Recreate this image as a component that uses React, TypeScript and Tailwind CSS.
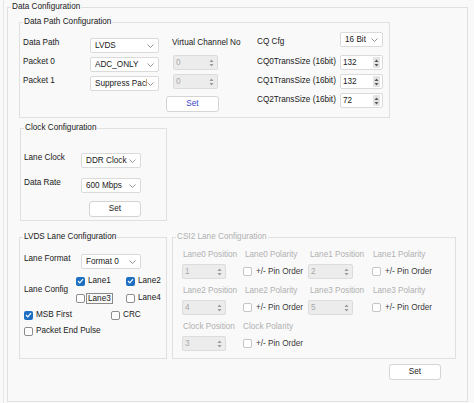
import type { ReactNode } from 'react'

function Chevron() {
  return (
    <svg width="7" height="4" viewBox="0 0 7 4" className="shrink-0">
      <polyline points="0.5,0.5 3.5,3.5 6.5,0.5" fill="none" stroke="#8a8a8a" strokeWidth="0.9" />
    </svg>
  )
}

function Combo({ value, className }: { value: string; className: string }) {
  return (
    <div className={`flex h-[15px] items-center justify-between overflow-hidden rounded-[2px] border border-[#dadada] bg-white pr-[4px] pl-[4px] whitespace-nowrap ${className}`}>
      <span className="overflow-hidden">{value}</span>
      <Chevron />
    </div>
  )
}

function Spin({ value, disabled, className }: { value: string; disabled?: boolean; className: string }) {
  return (
    <div
      className={`flex h-[15px] items-center justify-between rounded-[2px] border pr-[2px] pl-[2px] ${
        disabled ? 'border-[#dcdcdc] bg-[#ececec] text-[#a8a8a8]' : 'border-[#dadada] bg-white text-[#202020]'
      } ${className}`}
    >
      <span>{value}</span>
      <span className={`flex h-[11px] w-[7px] items-center justify-center rounded-[1px] ${disabled ? '' : 'bg-[#e4e4e4]'}`}>
        <svg width="5" height="8" viewBox="0 0 5 8">
          <polygon points="2.5,0.5 4.5,3 0.5,3" fill={disabled ? '#9a9a9a' : '#555'} />
          <polygon points="0.5,5 4.5,5 2.5,7.5" fill={disabled ? '#9a9a9a' : '#555'} />
        </svg>
      </span>
    </div>
  )
}

function Button({ children, className }: { children: ReactNode; className: string }) {
  return (
    <div className={`flex h-[16px] items-center justify-center rounded-[3px] border border-[#d4d4d4] bg-white ${className}`}>
      {children}
    </div>
  )
}

function Check({ checked, disabled }: { checked?: boolean; disabled?: boolean }) {
  if (checked)
    return (
      <span className="flex h-[9px] w-[9px] shrink-0 items-center justify-center rounded-[2px] bg-[#1d6fc4]">
        <svg width="7" height="6" viewBox="0 0 7 6">
          <polyline points="1,3 2.8,4.8 6,1.2" fill="none" stroke="#fff" strokeWidth="1.2" />
        </svg>
      </span>
    )
  return (
    <span
      className={`h-[9px] w-[9px] shrink-0 rounded-[2px] border bg-white ${disabled ? 'border-[#c4c4c4]' : 'border-[#8e8e8e]'}`}
    />
  )
}

function Group({ title, disabled, className, children }: { title: string; disabled?: boolean; className: string; children: ReactNode }) {
  return (
    <div className={`relative border border-[#e0e0e0] ${className}`}>
      <span
        className={`absolute -top-[7px] left-[3px] bg-[#f9f9f9] px-[1px] leading-[12px] whitespace-nowrap ${
          disabled ? 'text-[#b0b0b0]' : 'text-[#202020]'
        }`}
      >
        {title}
      </span>
      {children}
    </div>
  )
}

export default function App() {
  return (
    <div className="h-[403px] w-[474px] overflow-hidden bg-[#f9f9f9] font-['Liberation_Sans',Arial,sans-serif] text-[8.2px] leading-[12px] text-[#202020]">
      <div className="ml-[3px] h-[403px] border-l border-[#e6e6e6] pt-[7px] pl-[3px]">
        <Group title="Data Configuration" className="h-[395px] w-[461px]">
          {/* Data Path Configuration */}
          <Group title="Data Path Configuration" className="mt-[14px] ml-[11px] h-[96px] w-[371px]">
            <div className="flex items-start pl-[3px]">
              <div className="mt-[15px] grid grid-cols-[67px_69px] gap-y-[4px]">
                <div className="h-[15px] leading-[10px]">Data Path</div>
                <Combo value="LVDS" className="w-[69px]" />
                <div className="h-[15px] leading-[10px]">Packet 0</div>
                <Combo value="ADC_ONLY" className="w-[69px]" />
                <div className="h-[15px] leading-[10px]">Packet 1</div>
                <Combo value="Suppress Pacl" className="w-[69px]" />
              </div>
              <div className="ml-[7px] flex w-[53px] flex-col">
                <div className="mt-[15px] ml-[6px] h-[10px] leading-[10px] whitespace-nowrap">Virtual Channel No</div>
                <Spin value="0" disabled className="mt-[7px] ml-[7px] w-[45px]" />
                <Spin value="0" disabled className="mt-[4px] ml-[7px] w-[45px]" />
                <Button className="mt-[7px] w-[53px] text-[#3a44c6]">Set</Button>
              </div>
              <div className="ml-[38px] flex w-[83px] flex-col">
                <div className="mt-[14px] leading-[10px]">CQ Cfg</div>
                <div className="mt-[10px] leading-[10px] whitespace-nowrap">CQ0TransSize (16bit)</div>
                <div className="mt-[9px] leading-[10px] whitespace-nowrap">CQ1TransSize (16bit)</div>
                <div className="mt-[9px] leading-[10px] whitespace-nowrap">CQ2TransSize (16bit)</div>
              </div>
              <div className="flex w-[43px] flex-col">
                <Combo value="16 Bit" className="mt-[9px] w-[43px]" />
                <Spin value="132" className="mt-[8px] w-[43px]" />
                <Spin value="132" className="mt-[4px] w-[43px]" />
                <Spin value="72" className="mt-[4px] w-[43px]" />
              </div>
            </div>
          </Group>

          {/* Clock Configuration */}
          <Group title="Clock Configuration" className="mt-[10px] ml-[12px] h-[93px] w-[147px]">
            <div className="mt-[24px] grid grid-cols-[57px_60px] gap-y-[10px] pl-[3px]">
              <div className="h-[15px] leading-[10px]">Lane Clock</div>
              <Combo value="DDR Clock" className="w-[60px]" />
              <div className="h-[15px] leading-[10px]">Data Rate</div>
              <Combo value="600 Mbps" className="w-[60px]" />
            </div>
            <Button className="mt-[8px] ml-[68px] w-[52px]">Set</Button>
          </Group>

          <div className="mt-[16px] ml-[11px] flex gap-[5px]">
            {/* LVDS Lane Configuration */}
            <Group title="LVDS Lane Configuration" className="h-[122px] w-[148px]">
              <div className="mt-[16px] grid grid-cols-[57px_60px] pl-[4px]">
                <div className="h-[15px] leading-[10px]">Lane Format</div>
                <Combo value="Format 0" className="w-[60px]" />
              </div>
              <div className="mt-[6px] flex items-center pl-[4px]">
                <div className="w-[54px]">Lane Config</div>
                <div className="grid grid-cols-[50px_40px] gap-y-[5px]">
                  <div className="flex items-center gap-[3px]">
                    <Check checked />
                    <span>Lane1</span>
                  </div>
                  <div className="flex items-center gap-[3px]">
                    <Check checked />
                    <span>Lane2</span>
                  </div>
                  <div className="flex items-center gap-[1px]">
                    <Check />
                    <span className="border border-[#8a8a8a] px-[1px] leading-[9px]">Lane3</span>
                  </div>
                  <div className="flex items-center gap-[3px]">
                    <Check />
                    <span>Lane4</span>
                  </div>
                </div>
              </div>
              <div className="mt-[5px] flex items-center pl-[4px]">
                <div className="flex w-[87px] items-center gap-[3px]">
                  <Check checked />
                  <span>MSB First</span>
                </div>
                <div className="flex items-center gap-[3px]">
                  <Check />
                  <span>CRC</span>
                </div>
              </div>
              <div className="mt-[4px] flex items-center gap-[3px] pl-[4px]">
                <Check />
                <span>Packet End Pulse</span>
              </div>
            </Group>

            {/* CSI2 Lane Configuration */}
            <Group title="CSI2 Lane Configuration" disabled className="h-[122px] w-[284px]">
              <div className="mt-[12px] flex flex-col gap-[7px] pl-[9px] text-[#b0b0b0]">
                <div className="flex flex-col gap-[4px]">
                  <div className="grid h-[10px] grid-cols-[61px_65px_64px_auto] leading-[10px] whitespace-nowrap">
                    <span className="pl-[1px]">Lane0 Position</span>
                    <span className="pl-[2px]">Lane0 Polarity</span>
                    <span className="pl-[2px]">Lane1 Position</span>
                    <span className="pl-[1px]">Lane1 Polarity</span>
                  </div>
                  <div className="grid grid-cols-[61px_65px_64px_auto] items-center">
                    <Spin value="1" disabled className="w-[44px]" />
                    <div className="flex items-center gap-[4px] text-[#3a3a3a]">
                      <Check disabled />
                      <span>+/- Pin Order</span>
                    </div>
                    <Spin value="2" disabled className="w-[45px]" />
                    <div className="flex items-center gap-[4px] text-[#3a3a3a]">
                      <Check disabled />
                      <span>+/- Pin Order</span>
                    </div>
                  </div>
                </div>
                <div className="flex flex-col gap-[4px]">
                  <div className="grid h-[10px] grid-cols-[61px_65px_64px_auto] leading-[10px] whitespace-nowrap">
                    <span className="pl-[1px]">Lane2 Position</span>
                    <span className="pl-[2px]">Lane2 Polarity</span>
                    <span className="pl-[2px]">Lane3 Position</span>
                    <span className="pl-[1px]">Lane3 Polarity</span>
                  </div>
                  <div className="grid grid-cols-[61px_65px_64px_auto] items-center">
                    <Spin value="4" disabled className="w-[44px]" />
                    <div className="flex items-center gap-[4px] text-[#3a3a3a]">
                      <Check disabled />
                      <span>+/- Pin Order</span>
                    </div>
                    <Spin value="5" disabled className="w-[45px]" />
                    <div className="flex items-center gap-[4px] text-[#3a3a3a]">
                      <Check disabled />
                      <span>+/- Pin Order</span>
                    </div>
                  </div>
                </div>
                <div className="flex flex-col gap-[4px]">
                  <div className="grid h-[10px] grid-cols-[61px_65px] leading-[10px] whitespace-nowrap">
                    <span className="pl-[1px]">Clock Position</span>
                    <span>Clock Polarity</span>
                  </div>
                  <div className="grid grid-cols-[61px_65px] items-center">
                    <Spin value="3" disabled className="w-[44px]" />
                    <div className="flex items-center gap-[4px] text-[#3a3a3a]">
                      <Check disabled />
                      <span>+/- Pin Order</span>
                    </div>
                  </div>
                </div>
              </div>
            </Group>
          </div>

          <div className="mt-[5px] flex justify-end pr-[26px]">
            <Button className="w-[52px]">Set</Button>
          </div>
        </Group>
      </div>
    </div>
  )
}
